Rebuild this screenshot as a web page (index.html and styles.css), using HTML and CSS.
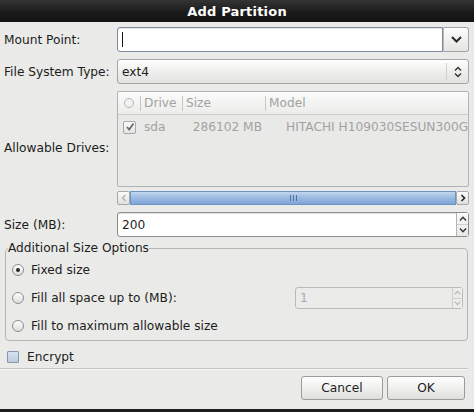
FILE: index.html
```html
<!DOCTYPE html>
<html>
<head>
<meta charset="utf-8">
<link rel="stylesheet" href="styles.css">
</head>
<body>
<div class="window">
  <div class="titlebar">Add Partition</div>

  <div class="form">
    <div class="lbl">Mount Point:</div>
    <div class="combo">
      <div class="combo-entry"><span class="caret"></span></div>
      <div class="combo-btn">
        <svg width="11" height="7" viewBox="0 0 11 7"><path d="M1 1 L5.5 5.5 L10 1" fill="none" stroke="#2a2a2a" stroke-width="2"/></svg>
      </div>
    </div>

    <div class="lbl">File System Type:</div>
    <div class="select">
      <div class="select-text">ext4</div>
      <div class="select-btn">
        <svg width="8" height="12" viewBox="0 0 8 12"><path d="M1 4.5 L4 1.5 L7 4.5 M1 7.5 L4 10.5 L7 7.5" fill="none" stroke="#333" stroke-width="1.4"/></svg>
      </div>
    </div>

    <div class="lbl">Allowable Drives:</div>
    <div class="drives">
      <div class="tree">
        <div class="tree-head">
          <div class="hcell hfirst"><span class="hcircle"></span></div>
          <div class="hcell">Drive</div>
          <div class="hcell">Size</div>
          <div class="hcell">Model</div>
        </div>
        <div class="tree-row">
          <div class="rcell rfirst">
            <span class="rcheck">
              <svg width="10" height="10" viewBox="0 0 10 10"><path d="M2 5 L4.2 7.5 L8.5 1.5" fill="none" stroke="#6a6a6a" stroke-width="1.8"/></svg>
            </span>
          </div>
          <div class="rcell">sda</div>
          <div class="rcell rsize">286102 MB</div>
          <div class="rcell rmodel">HITACHI H109030SESUN300G</div>
        </div>
      </div>
      <div class="hscroll">
        <div class="sb-btn">
          <svg width="6" height="8" viewBox="0 0 6 8"><path d="M4.5 1 L1.5 4 L4.5 7" fill="none" stroke="#b0b0b0" stroke-width="1.3"/></svg>
        </div>
        <div class="sb-slider"><span class="grip"></span><span class="grip"></span><span class="grip"></span></div>
        <div class="sb-btn">
          <svg width="6" height="8" viewBox="0 0 6 8"><path d="M1.5 1 L4.5 4 L1.5 7" fill="none" stroke="#222" stroke-width="1.6"/></svg>
        </div>
      </div>
    </div>

    <div class="lbl">Size (MB):</div>
    <div class="spin">
      <div class="spin-text">200</div>
      <div class="spin-btns">
        <div class="spin-half">
          <svg width="8" height="5" viewBox="0 0 8 5"><path d="M1 4.5 L4 1.3 L7 4.5" fill="none" stroke="#333" stroke-width="1.4"/></svg>
        </div>
        <div class="spin-half">
          <svg width="8" height="5" viewBox="0 0 8 5"><path d="M1 0.5 L4 3.7 L7 0.5" fill="none" stroke="#333" stroke-width="1.4"/></svg>
        </div>
      </div>
    </div>
  </div>

  <fieldset class="options">
    <legend>Additional Size Options</legend>
    <div class="opt-row r1">
      <span class="radio checked"></span><span>Fixed size</span>
    </div>
    <div class="opt-row r2">
      <span class="radio"></span><span>Fill all space up to (MB):</span>
      <div class="spin spin-disabled">
        <div class="spin-text">1</div>
        <div class="spin-btns">
          <div class="spin-half">
            <svg width="7" height="5" viewBox="0 0 8 5"><path d="M1 4.5 L4 1.3 L7 4.5" fill="none" stroke="#b8b8b8" stroke-width="1.3"/></svg>
          </div>
          <div class="spin-half">
            <svg width="7" height="5" viewBox="0 0 8 5"><path d="M1 0.5 L4 3.7 L7 0.5" fill="none" stroke="#b8b8b8" stroke-width="1.3"/></svg>
          </div>
        </div>
      </div>
    </div>
    <div class="opt-row r3">
      <span class="radio"></span><span>Fill to maximum allowable size</span>
    </div>
  </fieldset>

  <div class="encrypt">
    <span class="checkbox"></span><span>Encrypt</span>
  </div>

  <div class="sep"></div>

  <div class="actions">
    <div class="btn btn-cancel">Cancel</div>
    <div class="btn btn-ok">OK</div>
  </div>

  <div class="bottom-bar"></div>
</div>
</body>
</html>
```

FILE: styles.css
```css
html, body {
  margin: 0;
  padding: 0;
}

body {
  width: 474px;
  height: 412px;
  overflow: hidden;
  background: #eaebe8;
  font-family: "DejaVu Sans", "Noto Sans", sans-serif;
  font-size: 12.2px;
  color: #1c1c1c;
}

.window {
  display: flex;
  flex-direction: column;
  height: 412px;
}

.titlebar {
  height: 22px;
  flex: none;
  background: linear-gradient(#343434, #191919 60%, #141414);
  color: #ffffff;
  font-weight: bold;
  font-size: 13px;
  letter-spacing: 0.2px;
  display: flex;
  align-items: center;
  justify-content: center;
  padding-top: 1px;
  box-sizing: border-box;
}

/* ---------- top form grid ---------- */
.form {
  display: grid;
  grid-template-columns: 113px 352px;
  grid-template-rows: 25px 25px 114px 25px;
  row-gap: 7px;
  padding: 5px 0 0 4px;
}

.lbl {
  display: flex;
  align-items: center;
  white-space: nowrap;
}

/* combo with entry */
.combo {
  display: flex;
  box-sizing: border-box;
}

.combo-entry {
  flex: 1;
  background: #ffffff;
  border: 1px solid #7c8ba0;
  border-radius: 3px 0 0 3px;
  box-shadow: inset 0 1px 1px rgba(0,0,0,0.12);
  display: flex;
  align-items: center;
  padding-left: 4px;
}

.caret {
  width: 1px;
  height: 15px;
  background: #111;
}

.combo-btn {
  width: 24px;
  border: 1px solid #a3a3a3;
  border-left: 1px solid #b8b8b8;
  border-radius: 0 3px 3px 0;
  background: linear-gradient(#fdfdfd, #e4e4e2);
  display: flex;
  align-items: center;
  justify-content: center;
}

/* select button */
.select {
  display: flex;
  border: 1px solid #a6a6a6;
  border-radius: 3px;
  background: linear-gradient(#fefefe, #ededeb 55%, #e2e2e0);
  box-sizing: border-box;
}

.select-text {
  flex: 1;
  display: flex;
  align-items: center;
  padding-left: 4px;
}

.select-btn {
  width: 21px;
  margin: 3px 0;
  border-left: 1px solid #d0d0ce;
  display: flex;
  align-items: center;
  justify-content: center;
}

/* drives tree */
.drives {
  display: flex;
  flex-direction: column;
  gap: 4px;
}

.tree {
  height: 96px;
  box-sizing: border-box;
  border: 1px solid #b2b2b0;
  border-radius: 2px;
  background: #e9eae7;
  color: #a2a2a2;
  overflow: hidden;
}

.tree-head {
  height: 22px;
  display: grid;
  grid-template-columns: 22px 42px 83px 1fr;
  align-items: center;
  background: linear-gradient(#fbfbfb, #ececea);
  border-bottom: 1px solid #cdcdcb;
}

.hcell {
  height: 15px;
  line-height: 15px;
  border-left: 1px solid #c6c6c4;
  padding-left: 3px;
  white-space: nowrap;
}

.hfirst {
  border-left: none;
  padding-left: 6px;
  display: flex;
  align-items: center;
}

.hcircle {
  width: 8px;
  height: 8px;
  border: 1px solid #b4b4b4;
  border-radius: 50%;
  background: #f2f2f2;
}

.tree-row {
  height: 24px;
  display: grid;
  grid-template-columns: 22px 42px 83px 1fr;
  align-items: center;
}

.rcell {
  white-space: nowrap;
  padding-left: 4px;
}

.rfirst {
  padding-left: 5px;
  display: flex;
  align-items: center;
}

.rcheck {
  width: 11px;
  height: 11px;
  border: 1px solid #a8a8a8;
  border-radius: 2px;
  background: linear-gradient(#fafafa, #e4e4e4);
  display: flex;
  align-items: center;
  justify-content: center;
}

.rsize {
  padding-left: 0;
  padding-right: 3px;
  text-align: right;
}

.rmodel {
  padding-left: 21px;
  overflow: hidden;
}

/* horizontal scrollbar */
.hscroll {
  height: 14px;
  display: grid;
  grid-template-columns: 13px 1fr 13px;
  box-sizing: border-box;
}

.sb-btn {
  border: 1px solid #a9a9a7;
  border-radius: 2px;
  background: linear-gradient(#fbfbfb, #dfdfdd);
  display: flex;
  align-items: center;
  justify-content: center;
}

.sb-slider {
  border: 1px solid #6d93c4;
  background: linear-gradient(#c3d6ee, #9ebbe2 45%, #7ea5d6);
  display: flex;
  align-items: center;
  justify-content: center;
  gap: 2px;
}

.grip {
  width: 1px;
  height: 6px;
  background: #4f74a6;
}

/* spin button */
.spin {
  display: flex;
  background: #ffffff;
  border: 1px solid #8d8d8b;
  border-radius: 3px;
  box-shadow: inset 0 1px 1px rgba(0,0,0,0.12);
  box-sizing: border-box;
}

.spin-text {
  flex: 1;
  display: flex;
  align-items: center;
  padding-left: 4px;
}

.spin-btns {
  width: 11px;
  display: flex;
  flex-direction: column;
  border-left: 1px solid #b4b4b2;
  background: linear-gradient(#fafafa, #e8e8e6);
}

.spin-half {
  flex: 1;
  display: flex;
  align-items: center;
  justify-content: center;
}

.spin-half + .spin-half {
  border-top: 1px solid #cfcfcd;
}

/* ---------- options frame ---------- */
.options {
  margin: 4px 6px 0 5px;
  padding: 0 4px 1px 2px;
  border: 1px solid #b6b6b4;
  border-radius: 4px;
  min-width: 0;
}

.options legend {
  padding: 0;
  line-height: 15px;
}

.opt-row {
  display: flex;
  align-items: center;
  padding-left: 4px;
  white-space: nowrap;
}

.r1 { height: 28px; }
.r2 { height: 28px; }
.r3 { height: 27px; }

.radio {
  width: 10px;
  height: 10px;
  border: 1px solid #8e8e8c;
  border-radius: 50%;
  background: linear-gradient(#ffffff, #dcdcda);
  margin-right: 7px;
  display: flex;
  align-items: center;
  justify-content: center;
  flex: none;
}

.radio.checked::after {
  content: "";
  width: 4px;
  height: 4px;
  border-radius: 50%;
  background: #2a2a2a;
}

.spin-disabled {
  margin-left: auto;
  width: 168px;
  height: 22px;
  background: #ebebe9;
  border-color: #bababa;
  box-shadow: none;
  color: #aaaaaa;
}

.spin-disabled .spin-btns {
  width: 9px;
  border-left-color: #cdcdcb;
  background: #ececea;
}

/* ---------- encrypt, separator, buttons ---------- */
.encrypt {
  margin-top: 8px;
  height: 16px;
  display: flex;
  align-items: center;
  padding-left: 7px;
}

.checkbox {
  width: 10px;
  height: 10px;
  border: 1px solid #8797ad;
  border-radius: 1px;
  background: linear-gradient(#d9e2ee, #bccbe0);
  margin-right: 8px;
}

.sep {
  margin: 3px 6px 0 0;
  height: 1px;
  background: #c3c3c1;
  border-bottom: 1px solid #f6f6f4;
}

.actions {
  margin-top: 6px;
  display: flex;
  justify-content: flex-end;
  gap: 4px;
  padding-right: 9px;
}

.btn {
  height: 24px;
  box-sizing: border-box;
  border: 1px solid #9c9c9a;
  border-radius: 3px;
  background: linear-gradient(#fefefe, #f0f0ee 50%, #dededc);
  display: flex;
  align-items: center;
  justify-content: center;
  color: #1e1e1e;
}

.btn-cancel { width: 82px; }
.btn-ok { width: 78px; }

.bottom-bar {
  margin-top: auto;
  height: 3px;
  background: #1d1d1d;
}
```
